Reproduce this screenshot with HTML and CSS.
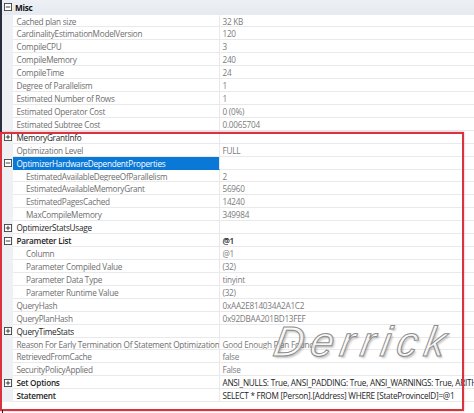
FILE: index.html
```html
<!DOCTYPE html>
<html>
<head>
<meta charset="utf-8">
<link rel="stylesheet" href="styles.css">
</head>
<body>
<div class="grid">
  <div class="row cat"><span class="gut"><svg class="exp" viewBox="0 0 9 9"><rect x="0.5" y="0.5" width="8" height="8"/><path d="M2 4.5h5"/></svg></span><span class="name">Misc</span><span class="val"></span></div>
  <div class="row"><span class="gut"></span><span class="name">Cached plan size</span><span class="val">32 KB</span></div>
  <div class="row"><span class="gut"></span><span class="name">CardinalityEstimationModelVersion</span><span class="val">120</span></div>
  <div class="row"><span class="gut"></span><span class="name">CompileCPU</span><span class="val">3</span></div>
  <div class="row"><span class="gut"></span><span class="name">CompileMemory</span><span class="val">240</span></div>
  <div class="row"><span class="gut"></span><span class="name">CompileTime</span><span class="val">24</span></div>
  <div class="row"><span class="gut"></span><span class="name">Degree of Parallelism</span><span class="val">1</span></div>
  <div class="row"><span class="gut"></span><span class="name">Estimated Number of Rows</span><span class="val">1</span></div>
  <div class="row"><span class="gut"></span><span class="name">Estimated Operator Cost</span><span class="val">0 (0%)</span></div>
  <div class="row"><span class="gut"></span><span class="name">Estimated Subtree Cost</span><span class="val">0.0065704</span></div>
  <div class="row"><span class="gut"><svg class="exp" viewBox="0 0 9 9"><rect x="0.5" y="0.5" width="8" height="8"/><path d="M2 4.5h5M4.5 2v5"/></svg></span><span class="name dark">MemoryGrantInfo</span><span class="val"></span></div>
  <div class="row"><span class="gut"></span><span class="name">Optimization Level</span><span class="val">FULL</span></div>
  <div class="row"><span class="gut"><svg class="exp" viewBox="0 0 9 9"><rect x="0.5" y="0.5" width="8" height="8"/><path d="M2 4.5h5"/></svg></span><span class="name sel">OptimizerHardwareDependentProperties</span><span class="val"></span></div>
  <div class="row"><span class="gut"></span><span class="name sub">EstimatedAvailableDegreeOfParallelism</span><span class="val">2</span></div>
  <div class="row"><span class="gut"></span><span class="name sub">EstimatedAvailableMemoryGrant</span><span class="val">56960</span></div>
  <div class="row"><span class="gut"></span><span class="name sub">EstimatedPagesCached</span><span class="val">14240</span></div>
  <div class="row"><span class="gut"></span><span class="name sub">MaxCompileMemory</span><span class="val">349984</span></div>
  <div class="row"><span class="gut"><svg class="exp" viewBox="0 0 9 9"><rect x="0.5" y="0.5" width="8" height="8"/><path d="M2 4.5h5M4.5 2v5"/></svg></span><span class="name dark">OptimizerStatsUsage</span><span class="val"></span></div>
  <div class="row"><span class="gut"><svg class="exp" viewBox="0 0 9 9"><rect x="0.5" y="0.5" width="8" height="8"/><path d="M2 4.5h5"/></svg></span><span class="name bold">Parameter List</span><span class="val bold">@1</span></div>
  <div class="row"><span class="gut"></span><span class="name sub">Column</span><span class="val">@1</span></div>
  <div class="row"><span class="gut"></span><span class="name sub">Parameter Compiled Value</span><span class="val">(32)</span></div>
  <div class="row"><span class="gut"></span><span class="name sub">Parameter Data Type</span><span class="val">tinyint</span></div>
  <div class="row"><span class="gut"></span><span class="name sub">Parameter Runtime Value</span><span class="val">(32)</span></div>
  <div class="row"><span class="gut"></span><span class="name">QueryHash</span><span class="val">0xAA2E814034A2A1C2</span></div>
  <div class="row"><span class="gut"></span><span class="name">QueryPlanHash</span><span class="val">0x92DBAA201BD13FEF</span></div>
  <div class="row"><span class="gut"><svg class="exp" viewBox="0 0 9 9"><rect x="0.5" y="0.5" width="8" height="8"/><path d="M2 4.5h5M4.5 2v5"/></svg></span><span class="name dark">QueryTimeStats</span><span class="val"></span></div>
  <div class="row"><span class="gut"></span><span class="name">Reason For Early Termination Of Statement Optimization</span><span class="val">Good Enough Plan Found</span></div>
  <div class="row"><span class="gut"></span><span class="name">RetrievedFromCache</span><span class="val">false</span></div>
  <div class="row"><span class="gut"></span><span class="name">SecurityPolicyApplied</span><span class="val">False</span></div>
  <div class="row"><span class="gut"><svg class="exp" viewBox="0 0 9 9"><rect x="0.5" y="0.5" width="8" height="8"/><path d="M2 4.5h5M4.5 2v5"/></svg></span><span class="name bold">Set Options</span><span class="val dark">ANSI_NULLS: True, ANSI_PADDING: True, ANSI_WARNINGS: True, ARITHABORT: True</span></div>
  <div class="row"><span class="gut"></span><span class="name bold">Statement</span><span class="val dark">SELECT * FROM [Person].[Address] WHERE [StateProvinceID]=@1</span></div>
</div>
<div class="redbox"></div>
<div class="wm">Derrick</div>
<div class="tick"></div>
</body>
</html>
```
FILE: styles.css
```css
html, body {
  margin: 0;
  padding: 0;
  background: #ffffff;
  width: 474px;
  height: 413px;
  overflow: hidden;
  position: relative;
  font-family: "Open Sans", "Noto Sans", sans-serif;
  font-size: 8.2px;
  letter-spacing: -0.25px;
}

.grid {
  display: flex;
  flex-direction: column;
  border-left: 2px solid #2a2f3d;
  background: #eef0f4;
}

.row {
  display: grid;
  grid-template-columns: 11px 207px 1fr;
  height: 12.93px;
  line-height: 13.6px;
}

.row.cat {
  height: 14.5px;
  line-height: 15px;
  background: linear-gradient(#edf0f5, #e6eaf0);
}

.gut {
  display: flex;
  align-items: center;
  padding-left: 2px;
}

.exp {
  width: 8px;
  height: 8px;
  display: block;
}

.exp rect {
  fill: #ffffff;
  stroke: #3f3f3f;
  stroke-width: 1;
}

.exp path {
  stroke: #2b2b2b;
  stroke-width: 1;
  fill: none;
}

.name, .val {
  white-space: nowrap;
  overflow: hidden;
  background: #ffffff;
  border-bottom: 1px solid #e9e9ec;
  box-sizing: border-box;
}

.name {
  color: #6e6e6e;
  padding-left: 3.5px;
  border-right: 1px solid #e9e9ec;
}

.val {
  color: #7b7b7b;
  padding-left: 2.5px;
}

.cat .name, .cat .val {
  background: transparent;
  border: none;
}

.cat .name {
  color: #111;
  font-weight: 700;
  padding-left: 2px;
}

.name.sub {
  padding-left: 13px;
}

.name.dark, .val.dark {
  color: #1e1e1e;
}

.name.bold, .val.bold {
  color: #1e1e1e;
  font-weight: 600;
}

.name.sel {
  background: #0a78d6;
  color: #ffffff;
  border-bottom-color: #0a78d6;
}

.redbox {
  position: absolute;
  left: 0;
  top: 131.5px;
  width: 460px;
  height: 275px;
  border: 2px solid #d8333e;
  box-shadow: 0 0 2px rgba(216, 51, 62, 0.45);
  pointer-events: none;
}

.wm {
  position: absolute;
  left: 270px;
  top: 318px;
  font-family: "Liberation Sans", sans-serif;
  font-style: italic;
  font-size: 42px;
  letter-spacing: 6.4px;
  color: rgba(255, 255, 255, 0.7);
  -webkit-text-stroke: 1px #8c8c8c;
  text-shadow: 2px 2px 2px rgba(0, 0, 0, 0.22);
  transform: skewX(-10deg);
  transform-origin: left bottom;
}

.tick {
  position: absolute;
  left: 2px;
  top: 410px;
  width: 1px;
  height: 3px;
  background: #222;
}
```
